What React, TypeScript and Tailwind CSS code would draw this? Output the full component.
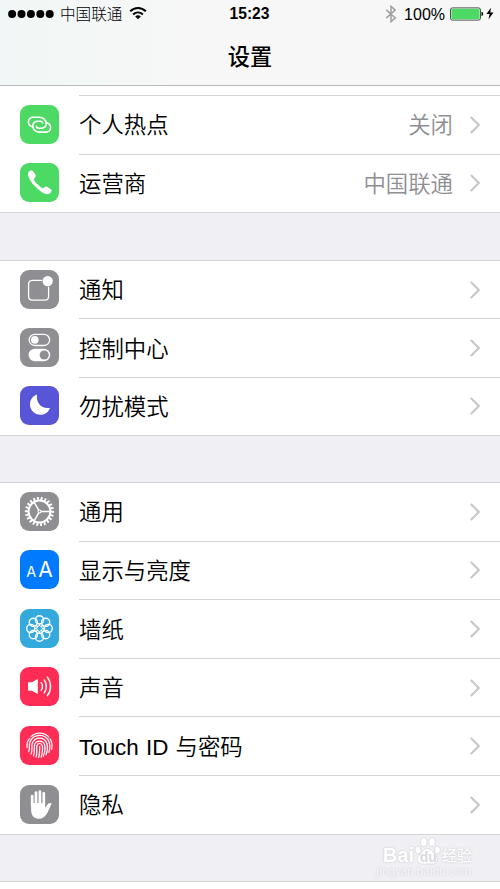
import type { ReactNode } from "react";

type RowData = { label: string; value?: string; color: string; icon: ReactNode };

const polar = (r: number, deg: number) => {
  const a = (deg * Math.PI) / 180;
  return [19.5 + r * Math.cos(a), 19.5 + r * Math.sin(a)];
};

const Glyph = ({ children }: { children: ReactNode }) => (
  <svg viewBox="0 0 39 39" className="size-full" fill="none" stroke="white" strokeLinecap="round" strokeLinejoin="round">
    {children}
  </svg>
);

const HotspotIcon = () => (
  <Glyph>
    <g strokeWidth="1.6">
      <path d="M12.6 21.8C10 21 8.4 18.9 8.4 16.7C8.4 14.2 10.4 12.3 13 12.3H19.4C23.2 12.3 26.2 15 26.2 18.3C26.2 21.3 24.2 23.2 21.3 23.2H18.8C17.2 23.2 16.4 22.3 16.4 21.3" />
      <path d="M26.4 17.6C29 18.4 30.6 20.5 30.6 22.7C30.6 25.2 28.6 27.1 26 27.1H19.6C15.8 27.1 12.8 24.4 12.8 21.1C12.8 18.1 14.8 16.2 17.7 16.2H20.2C21.8 16.2 22.6 17.1 22.6 18.1" />
    </g>
  </Glyph>
);

const PhoneIcon = () => (
  <Glyph>
    <path
      fill="white"
      stroke="none"
      d="M8.4 9.2C9.5 7.9 11.2 7.2 12.5 7.7C13.6 8.3 15.3 11.3 15.8 12.8C16.1 14 14.4 15 13.9 15.9C13.5 16.8 15.6 19.4 17.5 21.3C19.5 23.3 22 25.4 23 25.3C24 25 24.8 23.3 26.1 23.5C27.4 23.8 30.5 25.8 31.4 26.8C32.2 28 30.7 30 29.2 30.8C26.2 32.3 20.6 28.7 16.2 24.4C11.8 20.2 6.5 13.3 8.4 9.2Z"
    />
  </Glyph>
);

const NotificationIcon = () => (
  <Glyph>
    <path strokeWidth="1.3" d="M21.5 10.3H12.5C10 10.3 8.6 11.8 8.6 14.2V26.2C8.6 28.7 10 30.1 12.5 30.1H24.6C27.1 30.1 28.6 28.7 28.6 26.2V17.2" />
    <circle cx="27.7" cy="11.1" r="5.2" fill="white" stroke="none" />
  </Glyph>
);

const ControlIcon = () => (
  <Glyph>
    <rect x="9.2" y="6.3" width="20.4" height="11.2" rx="5.6" strokeWidth="1.3" />
    <circle cx="14.8" cy="11.9" r="3.8" fill="white" stroke="none" />
    <rect x="8.6" y="20.8" width="21.6" height="12.4" rx="6.2" fill="white" stroke="none" />
    <circle cx="24.2" cy="27" r="4.6" fill="#8e8e93" stroke="none" />
  </Glyph>
);

const MoonIcon = () => (
  <Glyph>
    <path fill="white" stroke="none" d="M17 8.6C15.7 16.8 21.4 23.4 29.9 21.9C28.5 25.9 25 28.7 20.6 28.7C14.6 28.7 10 24.1 10 18.4C10 13.9 12.8 10 17 8.6Z" />
  </Glyph>
);

const GearIcon = () => (
  <Glyph>
    <circle cx="19.5" cy="19.5" r="10.9" strokeWidth="2" />
    {Array.from({ length: 22 }, (_, i) => {
      const [x1, y1] = polar(11.5, (i * 360) / 22);
      const [x2, y2] = polar(14.6, (i * 360) / 22 + 2);
      return <line key={i} x1={x1} y1={y1} x2={x2} y2={y2} strokeWidth="1.9" strokeLinecap="butt" />;
    })}
    {[0, 120, 240].map((a) => {
      const [x2, y2] = polar(10.8, a);
      return <line key={a} x1="19.5" y1="19.5" x2={x2} y2={y2} strokeWidth="1.5" />;
    })}
    <circle cx="19.5" cy="19.5" r="1.5" fill="#8e8e93" strokeWidth="1.1" />
  </Glyph>
);

const DisplayIcon = () => (
  <div className="flex size-full items-baseline justify-center gap-[2px] pt-[5px] font-['Inter','Liberation_Sans',sans-serif] leading-[30px] font-normal text-white">
    <span className="text-[14.5px]">A</span>
    <span className="text-[21px]">A</span>
  </div>
);

const WallpaperIcon = () => (
  <Glyph>
    {Array.from({ length: 8 }, (_, i) => {
      const [cx, cy] = polar(8.7, i * 45);
      return <circle key={i} cx={cx} cy={cy} r="4.1" strokeWidth="1.4" />;
    })}
    {Array.from({ length: 8 }, (_, i) => {
      const [cx, cy] = polar(3.9, i * 45 + 22.5);
      return <circle key={`in${i}`} cx={cx} cy={cy} r="1.5" strokeWidth="0.9" />;
    })}
  </Glyph>
);

const SoundIcon = () => (
  <Glyph>
    <path fill="white" stroke="none" d="M8 16.2C8 15.6 8.4 15.3 9 15.3H11.8L17.8 11.9V26.9L11.8 23.7H9C8.4 23.7 8 23.4 8 22.8Z" />
    <g strokeWidth="1.4">
      <path d="M21.2 15.6C22.8 17.8 22.8 21 21.2 23.2" />
      <path d="M24.2 12.9C27 16.7 27 22.1 24.2 25.9" />
      <path d="M27.3 10.1C31.6 15.5 31.6 23.3 27.3 28.7" />
    </g>
  </Glyph>
);

const FingerprintIcon = () => (
  <Glyph>
    <g strokeWidth="1.25">
      <path d="M11 10.6C16 5.8 23.8 5.9 28.6 11" />
      <path d="M7 21.5C6.7 18 7.4 15 9.3 12.6M30 12.8C32 15.6 32.5 19.2 31.6 23.5" />
      <path d="M8.7 25.5C10 22 8.7 19.2 10 15.8C13.8 7.4 25.4 7.3 29 15.8C30.2 19 30 22.6 28.9 26.4" />
      <path d="M11.1 28C13 23.8 11 20.6 12.3 17.2C15.3 10.3 24.2 10.6 26.8 17.2C28 21 27.3 25 26.1 28.7" />
      <path d="M13.5 29.8C15.5 25.4 13.4 21.8 14.6 18.6C16.5 13.8 22.8 13.9 24.5 18.5C25.6 22.2 24.6 27 23.3 30.4" />
      <path d="M16 31C18 26.6 15.9 23 16.9 19.8C18 16.6 21.5 16.8 22.3 20C23.1 23.6 22.2 27.8 21.2 31.2" />
      <path d="M18.6 31.5C20.1 27.5 19.7 24 19.6 20.5" />
    </g>
  </Glyph>
);

const HandIcon = () => (
  <Glyph>
    <g strokeWidth="2.7">
      <path d="M12.2 21V11.2" />
      <path d="M16 20V7.5" />
      <path d="M19.9 20V6.7" />
      <path d="M23.8 20V8.4" />
    </g>
    <path
      fill="white"
      stroke="none"
      d="M10.9 18H25.1V22.4C26.2 21.8 27.2 19.2 28.6 18.4C29.9 17.7 31.8 17.9 31.5 18.9C29.8 22 28.3 26.6 26.6 29.3C24.9 32 22.2 33.8 19 33.8C14.5 33.8 11.9 31.3 11.2 26.5Z"
    />
  </Glyph>
);

const groups: { rowHeight: string; gapHeight: string; rows: RowData[] }[] = [
  {
    rowHeight: "h-[58.5px]",
    gapHeight: "h-[49px]",
    rows: [
      { label: "个人热点", value: "关闭", color: "bg-[#4cd964]", icon: <HotspotIcon /> },
      { label: "运营商", value: "中国联通", color: "bg-[#4cd964]", icon: <PhoneIcon /> },
    ],
  },
  {
    rowHeight: "h-[58.33px]",
    gapHeight: "h-[48px]",
    rows: [
      { label: "通知", color: "bg-[#8e8e93]", icon: <NotificationIcon /> },
      { label: "控制中心", color: "bg-[#8e8e93]", icon: <ControlIcon /> },
      { label: "勿扰模式", color: "bg-[#5856d6]", icon: <MoonIcon /> },
    ],
  },
  {
    rowHeight: "h-[58.6px]",
    gapHeight: "h-[48px]",
    rows: [
      { label: "通用", color: "bg-[#8e8e93]", icon: <GearIcon /> },
      { label: "显示与亮度", color: "bg-[#007aff]", icon: <DisplayIcon /> },
      { label: "墙纸", color: "bg-[#34aadc]", icon: <WallpaperIcon /> },
      { label: "声音", color: "bg-[#ff2d55]", icon: <SoundIcon /> },
      { label: "Touch ID 与密码", color: "bg-[#ff2d55]", icon: <FingerprintIcon /> },
      { label: "隐私", color: "bg-[#8e8e93]", icon: <HandIcon /> },
    ],
  },
];

const Row = ({ row, height, last }: { row: RowData; height: string; last: boolean }) => (
  <div className={`flex pl-5 ${height}`}>
    <div className={`mt-[8.6px] size-[39px] shrink-0 overflow-hidden rounded-[9px] ${row.color}`}>{row.icon}</div>
    <div className={`ml-5 flex flex-1 items-center border-b pr-[19px] ${last ? "border-transparent" : "border-[#d3d3d6]"}`}>
      <span className="flex-1 pt-[3px] text-[22.4px] text-black [word-spacing:1px]">{row.label}</span>
      {row.value && <span className="mr-4 pt-[3px] text-[22.4px] text-[#8e8e93]">{row.value}</span>}
      <svg width="12" height="20" viewBox="0 0 12 20" fill="none" stroke="#c7c7cc" strokeWidth="2.2">
        <path d="M1.8 2L9.8 10L1.8 18" />
      </svg>
    </div>
  </div>
);

const Header = () => (
  <header className="h-[86px] shrink-0 border-b border-[#b9b9bb] bg-[#f7f7f7] bg-linear-to-r from-[#f1f7f6] to-[#f7f7f7] to-40%">
    <div className="grid h-[28px] grid-cols-[1fr_auto_1fr] items-center text-[15.5px] leading-none">
      <div className="flex items-center pl-2">
        <svg width="46" height="10" viewBox="0 0 46 10">
          {[4.1, 13.5, 22.9, 32.3, 41.7].map((x) => (
            <circle key={x} cx={x} cy="5" r="4" />
          ))}
        </svg>
        <span className="ml-[6px] pt-[2px] text-[15.6px] font-light">中国联通</span>
        <svg className="-mt-[2px] ml-[7px]" width="18" height="14" viewBox="0 0 18 14" fill="none" stroke="black" strokeWidth="2">
          <path d="M1.2 5.3C5.7 1 12.3 1 16.8 5.3" />
          <path d="M4.1 8.5C7 5.8 11 5.8 13.9 8.5" />
          <path d="M6.2 10.4C7.8 8.9 10.2 8.9 11.8 10.4L9 13.2Z" fill="black" stroke="none" />
        </svg>
      </div>
      <span className="-ml-px text-[15.6px] font-bold">15:23</span>
      <div className="flex items-center justify-end pr-[6px]">
        <svg width="12" height="18" viewBox="0 0 12 18" fill="none" stroke="#a0a0a2" strokeWidth="1.5">
          <path d="M1.3 4.9L10.2 12.9L6 16.7V1.3L10.2 5.1L1.3 13.1" />
        </svg>
        <span className="ml-[7px] pt-px text-[16px]">100%</span>
        <svg className="ml-[5px]" width="34" height="14" viewBox="0 0 34 14">
          <rect x="0.5" y="0.9" width="30" height="12.2" rx="2" fill="#fff" stroke="#222" strokeWidth="0.8" />
          <rect x="1.4" y="1.8" width="28.2" height="10.4" rx="1" fill="#4cd964" />
          <path d="M31.5 4.8C33.7 5.4 33.7 8.6 31.5 9.2Z" />
        </svg>
        <svg className="-mt-px ml-[2px]" width="8" height="13" viewBox="0 0 8 13">
          <path d="M5 0.7L0.4 7H3.6L2.5 12.2L7.5 5.4H4.3Z" />
        </svg>
      </div>
    </div>
    <h1 className="mt-[14px] text-center text-[22.2px] leading-8 font-medium">设置</h1>
  </header>
);

const Watermark = () => (
  <div className="flex h-[46px] flex-col items-end pr-[28px] font-['Liberation_Sans','Noto_Sans_CJK_SC',sans-serif] text-white">
    <div className="mt-px flex h-[29px] items-end leading-none [text-shadow:0_0_2px_#bdbdc4]">
      <span className="text-[20px] font-bold">Bai</span>
      <svg width="27" height="29" viewBox="0 0 27 29" fill="#fff" stroke="#d3d3d9" strokeWidth="0.7">
        <ellipse cx="4" cy="14" rx="3" ry="3.9" />
        <ellipse cx="9.7" cy="6" rx="3.2" ry="4.5" />
        <ellipse cx="18" cy="6" rx="3.2" ry="4.5" />
        <ellipse cx="23.4" cy="14" rx="3" ry="3.9" />
        <path d="M13.5 12.5C17.5 12.5 19 16.5 21.5 19C25 22.5 24 28 19 28H8C3 28 2 22.5 5.5 19C8 16.5 9.5 12.5 13.5 12.5Z" />
        <text x="5.7" y="26" fontSize="14" fontWeight="bold" fill="#d9d9df" stroke="none" className="[text-shadow:none]">du</text>
      </svg>
      <span className="ml-px pb-[2px] text-[15px] font-medium">经验</span>
    </div>
    <span className="pr-px text-[11.5px] leading-[13px] font-normal tracking-[0.1px] text-[#f8f8fb] [text-shadow:0_0_2px_#c4c4cb]">jingyan.baidu.com</span>
  </div>
);

export default function App() {
  return (
    <div className="flex h-[889px] w-[500px] flex-col overflow-hidden bg-white font-['Liberation_Sans','Noto_Sans_CJK_SC',sans-serif] font-[350]">
      <Header />
      <div className="ml-[79px] h-[10px] shrink-0 border-b border-[#d3d3d6]" />
      {groups.map(({ rows, rowHeight, gapHeight }, i) => (
        <div key={i} className="shrink-0">
          <section>
            {rows.map((row, j) => (
              <Row key={row.label} row={row} height={rowHeight} last={j === rows.length - 1} />
            ))}
          </section>
          <div className={`-mt-px border-y border-[#d3d3d6] bg-[#efeff4] ${gapHeight}`}>
            {i === groups.length - 1 && <Watermark />}
          </div>
        </div>
      ))}
    </div>
  );
}
